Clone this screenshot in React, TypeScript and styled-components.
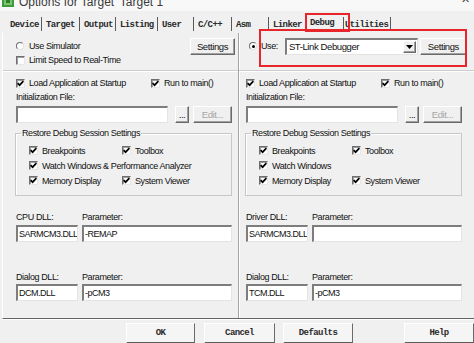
import React from 'react';
import styled, { createGlobalStyle, css } from 'styled-components';

const GlobalStyle = createGlobalStyle`
  html, body { margin: 0; padding: 0; background: #f0f0f0; }
  body { width: 474px; height: 343px; overflow: hidden; }
`;

const UI = `"Liberation Sans", Arial, sans-serif`;
const BITMAP = `"Liberation Mono", "Courier New", monospace`;

type Side = 'left' | 'right';

const Dialog = styled.div`
  position: relative;
  width: 474px;
  height: 343px;
  overflow: hidden;
  background: #f0f0f0;
  font-family: ${UI};
  font-size: 9px;
  letter-spacing: -0.4px;
  color: #111;
`;

const TitleBar = styled.div`
  height: 11px;
  display: flex;
  align-items: flex-start;
  background: #f8f8f8;
  overflow: hidden;
  padding-left: 2px;
`;

const TitleIcon = styled.svg`
  margin-top: -5px;
  flex: none;
`;

const TitleText = styled.span`
  margin: -4px 0 0 5px;
  font-size: 12px;
  line-height: 12px;
  letter-spacing: 0;
  color: #3a3a3a;
`;

const CloseGlyph = styled.span`
  margin: -7px 4px 0 auto;
  font-size: 11px;
  line-height: 12px;
  color: #444;
`;

const TabStrip = styled.div`
  height: 22px;
  display: flex;
  align-items: flex-end;
  padding-left: 6px;
`;

const Tab = styled.div<{ $w: number; $active?: boolean; $pad?: number }>`
  box-sizing: border-box;
  width: ${p => p.$w}px;
  height: 14px;
  margin-bottom: 2px;
  padding-left: ${p => (p.$pad ?? 4)}px;
  padding-top: ${p => (p.$active ? 1 : 3)}px;
  border-right: 1px solid #5a5a5a;
  font-family: ${BITMAP};
  font-weight: bold;
  font-size: 9px;
  line-height: 10px;
  letter-spacing: -0.6px;
  color: #2a2a2a;
  white-space: nowrap;
  overflow: hidden;
`;

const Body = styled.div`
  box-sizing: border-box;
  height: 286px;
  margin-left: 2px;
  display: grid;
  grid-template-columns: 236px 235px;
  border-left: 1px solid #ffffff;
  border-bottom: 1px solid #646464;
  box-shadow: 0 1px 0 #ffffff;
`;

const Column = styled.div<{ $side: Side }>`
  display: flex;
  flex-direction: column;
  ${p => p.$side === 'left' && css`
    border-right: 1px solid #a3a3a3;
  `}
  ${p => p.$side === 'right' && css`
    box-shadow: inset 1px 0 0 #ffffff;
  `}
`;

const sidePad = css<{ $side: Side }>`
  padding: ${p => (p.$side === 'left' ? '0 6px 0 13px' : '0 12px 0 7px')};
`;

const TopSection = styled.div<{ $side: Side }>`
  ${sidePad};
  box-sizing: border-box;
  height: 38px;
  padding-top: 4px;
  border-bottom: 1px solid #cdcdcd;
  box-shadow: 0 1px 0 #ffffff;
`;

const MainSection = styled.div<{ $side: Side }>`
  ${sidePad};
  padding-top: 6px;
  display: flex;
  flex-direction: column;
`;

const Row = styled.div<{ $h?: number; $mt?: number }>`
  display: flex;
  align-items: center;
  height: ${p => p.$h ?? 12}px;
  margin-top: ${p => p.$mt ?? 0}px;
`;

const SplitRow = styled.div<{ $first: number; $h?: number; $mt?: number }>`
  display: grid;
  grid-template-columns: ${p => p.$first}px 1fr;
  align-items: center;
  height: ${p => p.$h ?? 12}px;
  margin-top: ${p => p.$mt ?? 0}px;
`;

const Label = styled.span<{ $mt?: number }>`
  display: block;
  height: 10px;
  line-height: 10px;
  margin-top: ${p => p.$mt ?? 0}px;
  white-space: nowrap;
`;

const CheckWrap = styled.label`
  display: flex;
  align-items: center;
  gap: 4px;
  white-space: nowrap;
  line-height: 10px;
`;

const Box = styled.span`
  box-sizing: border-box;
  width: 9px;
  height: 9px;
  flex: none;
  background: #ffffff;
  border-style: solid;
  border-width: 1px;
  border-color: #6e6e6e #e6e6e6 #e6e6e6 #6e6e6e;
  box-shadow: inset 1px 1px 0 #9d9d9d;
  display: flex;
  align-items: center;
  justify-content: center;
`;

const RadioDot = styled.span<{ $on?: boolean }>`
  box-sizing: border-box;
  width: 8px;
  height: 8px;
  flex: none;
  border-radius: 50%;
  background: #ffffff;
  border: 1px solid;
  border-color: #6e6e6e #e2e2e2 #e2e2e2 #6e6e6e;
  display: flex;
  align-items: center;
  justify-content: center;
  &::after {
    content: '';
    width: 3px;
    height: 3px;
    border-radius: 50%;
    background: ${p => (p.$on ? '#000' : 'transparent')};
  }
`;

const Check: React.FC<{ label: string; on?: boolean }> = ({ label, on }) => (
  <CheckWrap>
    <Box>
      {on && (
        <svg width="7" height="7" viewBox="0 0 7 7">
          <path d="M0.6 3.2 L2.6 5.2 L6.4 1.2" stroke="#000" strokeWidth="1.7" fill="none" />
        </svg>
      )}
    </Box>
    {label}
  </CheckWrap>
);

const Radio: React.FC<{ label: string; on?: boolean; gap?: number }> = ({ label, on, gap }) => (
  <CheckWrap style={{ gap: gap ?? 5 }}>
    <RadioDot $on={on} />
    {label}
  </CheckWrap>
);

const raised = css`
  box-sizing: border-box;
  background: #f0f0f0;
  border-style: solid;
  border-width: 1px;
  border-color: #ffffff #6a6a6a #6a6a6a #ffffff;
  box-shadow: inset -1px -1px 0 #a0a0a0;
  display: flex;
  align-items: center;
  justify-content: center;
  white-space: nowrap;
`;

const Button = styled.div<{ $w: number; $ml?: number; $mr?: number; $disabled?: boolean }>`
  ${raised};
  flex: none;
  width: ${p => p.$w}px;
  height: 17px;
  margin-left: ${p => p.$ml ?? 0}px;
  margin-right: ${p => p.$mr ?? 0}px;
  color: ${p => (p.$disabled ? '#a6a6a6' : '#111')};
  font-size: 9.5px;
`;

const Field = styled.div<{ $w?: number }>`
  box-sizing: border-box;
  ${p => (p.$w ? `width: ${p.$w}px; flex: none;` : '')}
  height: 17px;
  background: #ffffff;
  border-style: solid;
  border-width: 2px 1px 1px 2px;
  border-color: #7d7d7d #e4e4e4 #e4e4e4 #7d7d7d;
  padding-left: 1px;
  display: flex;
  align-items: center;
  white-space: nowrap;
  overflow: hidden;
  letter-spacing: -0.5px;
`;

const Select = styled(Field)`
  margin-left: 7px;
  padding-left: 2px;
  padding-right: 1px;
  justify-content: space-between;
  font-size: 9.5px;
  letter-spacing: -0.4px;
`;

const ArrowBtn = styled.span`
  ${raised};
  width: 13px;
  height: 12px;
`;

const Group = styled.fieldset`
  margin: 5px 0 0 -1px;
  padding: 5px 0 7px 13px;
  border: 1px solid #c7c7c7;
  box-shadow: inset 1px 1px 0 #ffffff;
  min-width: 0;
`;

const Legend = styled.legend`
  margin-left: -8px;
  padding: 0 1px;
  height: 10px;
  line-height: 10px;
`;

const GroupRow = styled.div<{ $span?: boolean }>`
  display: grid;
  grid-template-columns: ${p => (p.$span ? '1fr' : '93px 1fr')};
  align-items: center;
  height: 15px;
`;

const DllGrid = styled.div<{ $mt: number }>`
  display: grid;
  grid-template-columns: 62px 150px;
  column-gap: 4px;
  margin-top: ${p => p.$mt}px;
`;

const Footer = styled.div`
  display: flex;
  padding: 4px 0 0 126px;
  gap: 9px;
`;

const FootButton = styled.div<{ $w: number; $push?: boolean }>`
  box-sizing: border-box;
  flex: none;
  width: ${p => p.$w}px;
  height: 21px;
  margin-left: ${p => (p.$push ? 'auto' : '0')};
  background: #f5f5f5;
  border-style: solid;
  border-width: 1px 1px 2px 1px;
  border-color: #ffffff #6a6a6a #5c5c5c #ffffff;
  display: flex;
  align-items: center;
  justify-content: center;
  padding-bottom: 1px;
  font-family: ${BITMAP};
  font-weight: bold;
  font-size: 9px;
  letter-spacing: -0.6px;
  color: #2a2a2a;
`;

const Annotation = styled.div<{ $x: number; $y: number; $w: number; $h: number }>`
  position: absolute;
  left: ${p => p.$x}px;
  top: ${p => p.$y}px;
  width: ${p => p.$w}px;
  height: ${p => p.$h}px;
  box-sizing: border-box;
  border: 2px solid #e8252a;
  pointer-events: none;
`;

const tabs = [
  { label: 'Device', w: 36 },
  { label: 'Target', w: 38 },
  { label: 'Output', w: 36 },
  { label: 'Listing', w: 42 },
  { label: 'User', w: 36 },
  { label: 'C/C++', w: 38 },
  { label: 'Asm', w: 37 },
  { label: 'Linker', w: 37 },
  { label: 'Debug', w: 38, active: true },
  { label: 'Utilities', w: 47, pad: 1 },
];

const SideColumn: React.FC<{ side: Side }> = ({ side }) => {
  const left = side === 'left';
  return (
    <Column $side={side}>
      <TopSection $side={side}>
        {left ? (
          <>
            <Row $h={18} style={{ justifyContent: 'space-between' }}>
              <Radio label="Use Simulator" />
              <Button $w={45} $mr={-3}>Settings</Button>
            </Row>
            <Row $h={10}>
              <Check label="Limit Speed to Real-Time" />
            </Row>
          </>
        ) : (
          <Row $h={18} style={{ paddingLeft: 3 }}>
            <Radio label="Use:" on gap={4} />
            <Select $w={133}>
              ST-Link Debugger
              <ArrowBtn>
                <svg width="7" height="4" viewBox="0 0 7 4">
                  <path d="M0 0 H7 L3.5 4 Z" fill="#000" />
                </svg>
              </ArrowBtn>
            </Select>
            <Button $w={47} $ml={2} $mr={-1}>Settings</Button>
          </Row>
        )}
      </TopSection>
      <MainSection $side={side}>
        <SplitRow $first={135}>
          <Check label="Load Application at Startup" on />
          <Check label="Run to main()" on />
        </SplitRow>
        <Label $mt={3}>Initialization File:</Label>
        <Row $h={17} $mt={4}>
          <Field $w={152} />
          <Button $w={14} $ml={7}>...</Button>
          <Button $w={39} $ml={4} $disabled>Edit...</Button>
        </Row>
        <Group>
          <Legend>Restore Debug Session Settings</Legend>
          <GroupRow>
            <Check label="Breakpoints" on />
            <Check label="Toolbox" on />
          </GroupRow>
          <GroupRow $span>
            <Check label={left ? 'Watch Windows & Performance Analyzer' : 'Watch Windows'} on />
          </GroupRow>
          <GroupRow>
            <Check label="Memory Display" on />
            <Check label="System Viewer" on />
          </GroupRow>
        </Group>
        <DllGrid $mt={16}>
          <Label>{left ? 'CPU DLL:' : 'Driver DLL:'}</Label>
          <Label>Parameter:</Label>
        </DllGrid>
        <DllGrid $mt={3}>
          <Field>SARMCM3.DLL</Field>
          <Field>{left ? '-REMAP' : ''}</Field>
        </DllGrid>
        <DllGrid $mt={30}>
          <Label>Dialog DLL:</Label>
          <Label>Parameter:</Label>
        </DllGrid>
        <DllGrid $mt={2}>
          <Field>{left ? 'DCM.DLL' : 'TCM.DLL'}</Field>
          <Field>-pCM3</Field>
        </DllGrid>
      </MainSection>
    </Column>
  );
};

export default function App() {
  return (
    <>
      <GlobalStyle />
      <Dialog>
        <TitleBar>
          <TitleIcon width="12" height="12" viewBox="0 0 12 12">
            <rect x="0" y="0" width="12" height="12" fill="#3f9a3a" />
            <rect x="2" y="2" width="8" height="8" fill="#7cc46f" />
            <rect x="4" y="4" width="4" height="4" fill="#2f7a2b" />
          </TitleIcon>
          <TitleText>Options for Target 'Target 1'</TitleText>
          <CloseGlyph>✕</CloseGlyph>
        </TitleBar>
        <TabStrip>
          {tabs.map(t => (
            <Tab key={t.label} $w={t.w} $active={t.active} $pad={t.pad}>
              {t.label}
            </Tab>
          ))}
        </TabStrip>
        <Body>
          <SideColumn side="left" />
          <SideColumn side="right" />
        </Body>
        <Footer>
          <FootButton $w={69}>OK</FootButton>
          <FootButton $w={71}>Cancel</FootButton>
          <FootButton $w={70} style={{ marginLeft: -1 }}>Defaults</FootButton>
          <FootButton $w={70} $push>Help</FootButton>
        </Footer>
        <Annotation $x={305} $y={13} $w={45} $h={19} />
        <Annotation $x={259} $y={29} $w={208} $h={38} />
      </Dialog>
    </>
  );
}
